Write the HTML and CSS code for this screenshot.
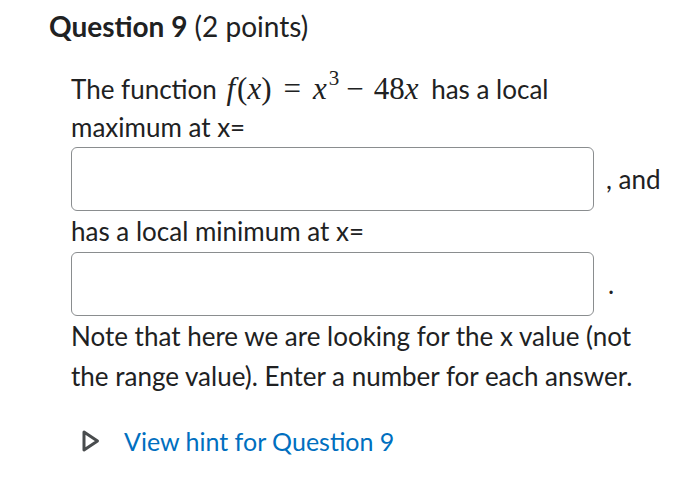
FILE: index.html
```
<!doctype html>
<html lang="en">
<head>
	<meta charset="UTF-8">
	<title>Question 9</title>
	<link rel="stylesheet" href="styles.css">
</head>
<body>
	<div class="question">
		<h2 class="q-title"><b>Question 9</b> (2 points)</h2>
		<div class="q-body">
			<div class="line">The function <span class="math"><i>f</i>(<i>x</i>)<span class="rel">=</span><i>x</i><sup>3</sup><span class="bin">−</span>48<i>x</i></span> has a local</div>
			<div class="line">maximum at x=</div>
			<div class="blank-row">
				<span class="blank"></span>
				<span class="after">, and</span>
			</div>
			<div class="line gap">has a local minimum at x=</div>
			<div class="blank-row">
				<span class="blank"></span>
				<span class="after dot">.</span>
			</div>
			<div class="note">Note that here we are looking for the x value (not<br>the range value). Enter a number for each answer.</div>
			<div class="hint">
				<svg class="hint-icon" width="22" height="24" viewBox="0 0 22 24"><polygon points="4,3 17.5,12 4,21" fill="none" stroke="#494c4e" stroke-width="3" stroke-linejoin="round"/></svg>
				<a class="hint-link" href="#">View hint for Question 9</a>
			</div>
		</div>
	</div>
</body>
</html>
```
FILE: styles.css
```
body{
	margin:0;
	background:#fff;
	color:#202122;
	font-family:Lato,"Liberation Sans",sans-serif;
}
.question{
	padding:8px 0 0 49px;
}
.q-title{
	margin:0;
	font-size:28px;
	font-weight:normal;
	line-height:36px;
}
.q-title b{
	font-weight:bold;
}
.q-body{
	margin:26px 0 0 22px;
	font-size:26px;
}
.line{
	line-height:38px;
	white-space:nowrap;
}
.line.gap{
	line-height:40px;
}
.math{
	font-family:"Liberation Serif","DejaVu Serif",serif;
	font-size:31px;
	margin:0 6px 0 3px;
}
.math i{
	font-style:italic;
}
.math i:first-child{
	margin-right:2px;
}
.math sup{
	font-size:21px;
	line-height:0;
	vertical-align:14px;
	margin-left:2px;
}
.math .rel{
	margin:0 12px;
}
.math .bin{
	margin:0 10px 0 7px;
}
.blank-row{
	display:flex;
	align-items:center;
	margin-top:1px;
}
.blank{
	width:521px;
	height:62px;
	border:1px solid #8a8d8f;
	border-radius:6px;
}
.after{
	margin-left:12px;
}
.after.dot{
	margin-left:14px;
}
.note{
	line-height:40px;
}
.hint{
	display:flex;
	align-items:center;
	margin-top:25px;
	line-height:40px;
	font-size:25px;
}
.hint-icon{
	margin-left:9px;
}
.hint-link{
	margin-left:22px;
	color:#006fbf;
	text-decoration:none;
}
```
